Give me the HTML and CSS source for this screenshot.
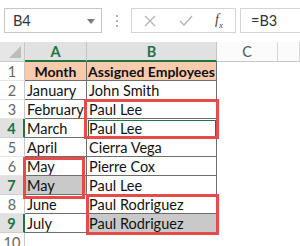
FILE: index.html
```html
<!DOCTYPE html>
<html>
<head>
  <title>Sheet</title>
  <link rel="stylesheet" href="styles.css">
</head>
<body>
  <div class="formula-bar">
    <div class="name-box">
      <span>B4</span>
      <svg class="caret" width="8" height="5" viewBox="0 0 8 5"><path d="M0 0h8L4 5z" fill="#7a7a7a"/></svg>
    </div>
    <div class="grip"><i></i><i></i><i></i></div>
    <div class="fx-buttons">
      <svg width="12" height="12" viewBox="0 0 12 12"><path d="M1 1l10 10M11 1L1 11" stroke="#b3b3b3" stroke-width="1.3" fill="none"/></svg>
      <svg width="14" height="11" viewBox="0 0 14 11"><path d="M1 6l4 4 8-9" stroke="#b3b3b3" stroke-width="1.3" fill="none"/></svg>
      <span class="fx">f<sub>x</sub></span>
    </div>
    <div class="formula-input">=B3</div>
  </div>

  <div class="sheet">
    <div class="corner"><svg width="12" height="12" viewBox="0 0 12 12"><path d="M12 0v12H0z" fill="#bdbdbd"/></svg></div>
    <div class="col-head sel">A</div>
    <div class="col-head sel">B</div>
    <div class="col-head">C</div>
    <div class="col-head"></div>

    <div class="row-head">1</div>
    <div class="cell a title">Month</div>
    <div class="cell title">Assigned Employees</div>
    <div class="blank"></div><div class="blank"></div>

    <div class="row-head">2</div>
    <div class="cell a">January</div>
    <div class="cell">John Smith</div>
    <div class="blank"></div><div class="blank"></div>

    <div class="row-head">3</div>
    <div class="cell a">February</div>
    <div class="cell">Paul Lee</div>
    <div class="blank"></div><div class="blank"></div>

    <div class="row-head sel">4</div>
    <div class="cell a">March</div>
    <div class="cell active">Paul Lee</div>
    <div class="blank"></div><div class="blank"></div>

    <div class="row-head">5</div>
    <div class="cell a">April</div>
    <div class="cell">Cierra Vega</div>
    <div class="blank"></div><div class="blank"></div>

    <div class="row-head">6</div>
    <div class="cell a">May</div>
    <div class="cell">Pierre Cox</div>
    <div class="blank"></div><div class="blank"></div>

    <div class="row-head sel">7</div>
    <div class="cell a shade">May</div>
    <div class="cell">Paul Lee</div>
    <div class="blank"></div><div class="blank"></div>

    <div class="row-head">8</div>
    <div class="cell a">June</div>
    <div class="cell">Paul Rodriguez</div>
    <div class="blank"></div><div class="blank"></div>

    <div class="row-head sel">9</div>
    <div class="cell a">July</div>
    <div class="cell shade">Paul Rodriguez</div>
    <div class="blank"></div><div class="blank"></div>

    <div class="row-head">10</div>
    <div class="blank"></div><div class="blank"></div><div class="blank"></div><div class="blank"></div>

    <!-- red annotation boxes -->
    <div class="mark mark-b34"></div>
    <div class="mark mark-a67"></div>
    <div class="mark mark-b89"></div>
  </div>
</body>
</html>
```

FILE: styles.css
```css
html, body {
  margin: 0;
  padding: 0;
  overflow: hidden;
  background: #fff;
}

body {
  width: 300px;
  height: 246px;
  font-family: Lato, "Liberation Sans", sans-serif;
  font-size: 14.5px;
  color: #111;
}

.formula-bar {
  display: flex;
  align-items: center;
  height: 42px;
  padding: 0 0 1px 4px;
  box-sizing: border-box;
}

.name-box {
  display: flex;
  align-items: center;
  justify-content: space-between;
  width: 98px;
  height: 25px;
  box-sizing: border-box;
  border: 1px solid #c6c6c6;
  padding: 0 6px 0 8px;
  color: #333;
}

.caret {
  margin-top: 1px;
}

.grip {
  display: flex;
  flex-direction: column;
  gap: 3px;
  margin: 0 13px 0 14px;
}

.grip i {
  display: block;
  width: 2px;
  height: 2px;
  background: #b0b0b0;
}

.fx-buttons {
  display: flex;
  align-items: center;
  width: 105px;
  height: 25px;
  box-sizing: border-box;
  border: 1px solid #d4d4d4;
  padding: 0 0 0 12px;
  gap: 23px;
}

.fx {
  font-family: "Liberation Serif", serif;
  font-style: italic;
  font-size: 14px;
  color: #444;
  margin-left: -1px;
}

.fx sub {
  font-size: 9px;
}

.formula-input {
  flex: 1;
  height: 25px;
  box-sizing: border-box;
  border: 1px solid #d4d4d4;
  border-right: none;
  margin-left: 4px;
  padding-left: 10px;
  line-height: 23px;
  color: #333;
}

.sheet {
  position: relative;
  display: grid;
  grid-template-columns: 25px 62px 130px 61px 1fr;
  grid-template-rows: 20px repeat(10, 19px);
}

.sheet > div {
  box-sizing: border-box;
  display: flex;
  align-items: center;
  overflow: hidden;
  white-space: nowrap;
}

.corner {
  background: #e6e6e6;
  border-right: 1px solid #c8c8c8;
  border-bottom: 1px solid #c8c8c8;
  justify-content: flex-end;
  align-items: flex-end !important;
  padding: 0 3px 3px 0;
}

.col-head {
  justify-content: center;
  color: #555;
  background: #fbfbfb;
  border-right: 1px solid #d6d6d6;
  border-bottom: 1px solid #c8c8c8;
}

.col-head.sel {
  background: #e1e1e1;
  color: #217346;
  font-weight: bold;
  border-bottom: 2px solid #217346;
  border-right-color: #c4c4c4;
}

.row-head {
  justify-content: center;
  color: #666;
  background: #fff;
  border-right: 1px solid #c8c8c8;
  border-bottom: 1px solid #e6e6e6;
}

.row-head.sel {
  background: #e1e1e1;
  color: #217346;
  font-weight: bold;
  border-right: 2px solid #217346;
  border-bottom-color: #d0d0d0;
}

.cell {
  padding: 0 2px;
  background: #fff;
  border-right: 1px solid #6e6e6e;
  border-bottom: 1px solid #6e6e6e;
}

.cell.title {
  background: #f8cbad;
  font-weight: bold;
  font-size: 14px;
  justify-content: center;
}

.cell.shade {
  background: #c9c9c9;
}

.cell.active {
  outline: 1px solid #217346;
  outline-offset: -2px;
}

.blank {
  background: #fff;
}

.mark {
  position: absolute;
  box-sizing: border-box;
  border: 3px solid #e64a4a;
}

.mark-b34 {
  left: 84px;
  top: 57px;
  width: 135px;
  height: 40px;
}

.mark-a67 {
  left: 23px;
  top: 115px;
  width: 62px;
  height: 42px;
}

.mark-b89 {
  left: 86px;
  top: 152px;
  width: 133px;
  height: 41px;
}
```
